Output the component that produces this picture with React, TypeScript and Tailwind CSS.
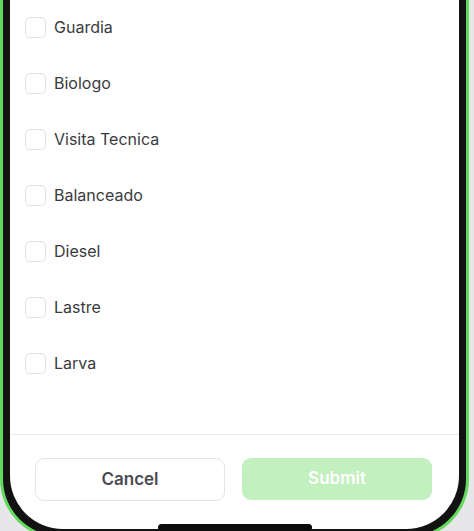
const options = [
  "Guardia",
  "Biologo",
  "Visita Tecnica",
  "Balanceado",
  "Diesel",
  "Lastre",
  "Larva",
];

function CheckRow({ label }: { label: string }) {
  return (
    <label className="flex h-[56px] items-center gap-2 pl-[15px]">
      <span className="h-[21px] w-[21px] shrink-0 rounded-[5px] border border-[#e0e1e3] bg-white" />
      <span className="text-[16px] text-[#3a3b40]">{label}</span>
    </label>
  );
}

export default function App() {
  return (
    <div className="h-[531px] w-[474px] overflow-hidden bg-[#e7e7e9] font-['Inter',sans-serif]">
      <div className="-mt-[40px] h-[579px] w-[469px] rounded-b-[60px] border-[3px] border-t-0 border-[#62d85c] bg-[#121212] px-[7px] pb-[7px]">
        <div className="flex h-full flex-col rounded-b-[53px] bg-white pt-[39px]">
          <div className="flex flex-col">
            {options.map((o) => (
              <CheckRow key={o} label={o} />
            ))}
          </div>
          <div className="mt-[43px] h-px shrink-0 bg-[#ebebed]" />
          <div className="flex gap-[17px] pl-[25px] pt-[23px]">
            <button className="h-[43px] w-[190px] rounded-[9px] border border-[#e4e4e7] bg-white text-[17px] font-semibold text-[#4a4b52]">
              Cancel
            </button>
            <button className="h-[42px] w-[190px] rounded-[9px] bg-[#c3f0bf] text-[17px] font-semibold text-white">
              Submit
            </button>
          </div>
          <div className="mx-auto mt-[23px] h-[7px] w-[154px] shrink-0 rounded-full bg-[#0c0c0c]" />
        </div>
      </div>
    </div>
  );
}
